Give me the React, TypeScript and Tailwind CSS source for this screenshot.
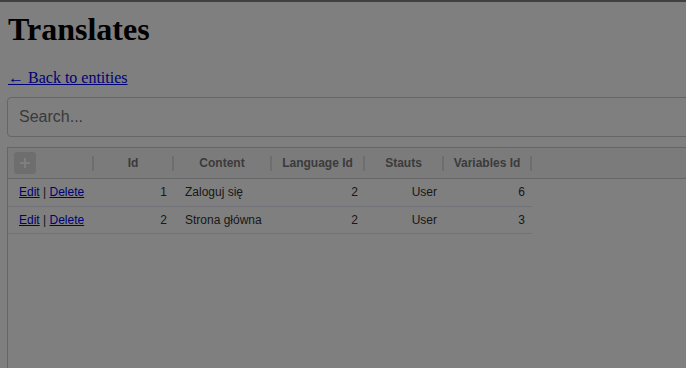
import React from "react"

const columns = [
  { key: "actions", label: "", width: "w-[86px]" },
  { key: "id", label: "Id", width: "w-[80px]" },
  { key: "content", label: "Content", width: "w-[98px]" },
  { key: "languageId", label: "Language Id", width: "w-[93px]" },
  { key: "status", label: "Stauts", width: "w-[79px]" },
  { key: "variablesId", label: "Variables Id", width: "w-[88px]" },
]

const rows = [
  { id: 1, content: "Zaloguj się", languageId: 2, status: "User", variablesId: 6 },
  { id: 2, content: "Strona główna", languageId: 2, status: "User", variablesId: 3 },
]

function HeaderCell({ label, width, first }: { label: string; width: string; first?: boolean }) {
  return (
    <div className={`${width} h-[30px] flex items-center shrink-0`}>
      <div className="flex-1 flex items-center justify-center h-full">
        {first ? (
          <button className="ml-[6px] mr-auto w-[22px] h-[22px] rounded-[3px] bg-[#dddddd] flex items-center justify-center">
            <svg width="14" height="14" viewBox="0 0 14 14">
              <path d="M7 2v10M2 7h10" stroke="#ffffff" strokeWidth="2" />
            </svg>
          </button>
        ) : (
          <span className="text-[12px] font-bold text-[#777777]">{label}</span>
        )}
      </div>
      <span className="w-[2px] h-[15px] bg-[#dddddd] shrink-0" />
    </div>
  )
}

export default function App() {
  return (
    <div className="relative h-screen bg-white overflow-hidden" style={{ fontFamily: '"Liberation Serif", serif' }}>
      <div className="h-[2px] bg-[#808080]" />
      <div className="pt-[9px] pl-[7px]">
        <h1 className="ml-px text-[32px] leading-[37px] font-bold text-black">Translates</h1>
        <div className="ml-px mt-[21px] text-[16px] leading-[18px]">
          <a href="#" className="text-[#0000ee] underline">
            ← Back to entities
          </a>
        </div>
        <input
          placeholder="Search..."
          className="mt-[10px] block w-[720px] h-[40px] px-[11px] border border-[#cccccc] rounded-[4px] text-[16px] text-[#333333] placeholder:text-[#757575] outline-none"
          style={{ fontFamily: '"Liberation Sans", Arial, sans-serif' }}
        />
        <div
          className="mt-[10px] w-[720px] h-[240px] border border-[#cccccc] bg-white"
          style={{ fontFamily: '"Liberation Sans", Arial, sans-serif' }}
        >
          <div className="flex bg-[#f7f7f7] border-b border-[#cccccc]">
            {columns.map((c, i) => (
              <HeaderCell key={c.key} label={c.label} width={c.width} first={i === 0} />
            ))}
          </div>
          {rows.map((r) => (
            <div key={r.id} className="flex w-[524px] h-[27.5px] items-center border-b border-[#e4e4f0] text-[12px] text-[#333333]">
              <div className="w-[86px] pl-[11px] shrink-0">
                <a href="#" className="text-[#0000ee] underline">Edit</a>
                <span className="text-[#333333]"> | </span>
                <a href="#" className="text-[#0000ee] underline">Delete</a>
              </div>
              <div className="w-[80px] pr-[7px] text-right shrink-0">{r.id}</div>
              <div className="w-[98px] pl-[11px] shrink-0">{r.content}</div>
              <div className="w-[93px] pr-[7px] text-right shrink-0">{r.languageId}</div>
              <div className="w-[79px] pr-[7px] text-right shrink-0">{r.status}</div>
              <div className="w-[88px] pr-[7px] text-right shrink-0">{r.variablesId}</div>
            </div>
          ))}
        </div>
      </div>
      <div className="fixed inset-0 bg-black/50 pointer-events-none" />
    </div>
  )
}
